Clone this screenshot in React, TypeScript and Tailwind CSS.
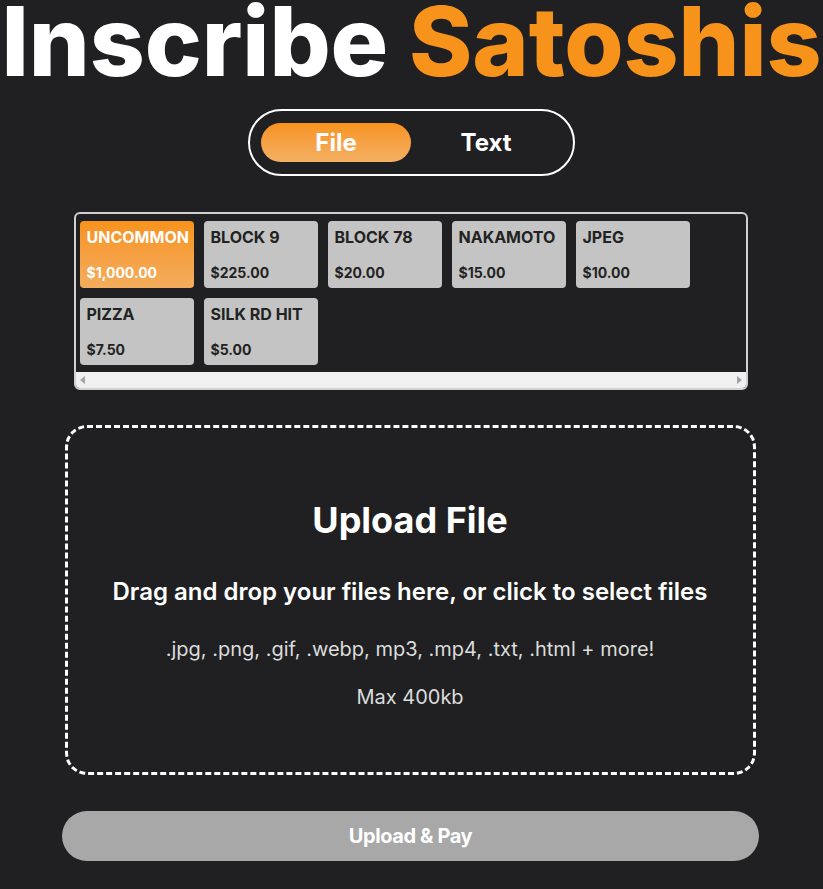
import { useState } from 'react';

type Tier = { name: string; price: string };

const TIERS: Tier[] = [
  { name: 'UNCOMMON', price: '$1,000.00' },
  { name: 'BLOCK 9', price: '$225.00' },
  { name: 'BLOCK 78', price: '$20.00' },
  { name: 'NAKAMOTO', price: '$15.00' },
  { name: 'JPEG', price: '$10.00' },
  { name: 'PIZZA', price: '$7.50' },
  { name: 'SILK RD HIT', price: '$5.00' },
];

const font = { fontFamily: 'Inter, "Noto Sans", sans-serif' };

export default function App() {
  const [mode, setMode] = useState<'file' | 'text'>('file');
  const [tier, setTier] = useState(0);

  return (
    <div className="min-h-screen bg-[#202022] text-white" style={font}>
      <div className="flex flex-col items-center">
        <h1 className="text-[96px] font-extrabold leading-[82px] tracking-[-0.1px] whitespace-nowrap">
          Inscribe <span className="text-[#f7931a]">Satoshis</span>
        </h1>

        {/* file / text switch */}
        <div className="mt-[27px] flex h-[67px] w-[327px] items-center rounded-full border-2 border-white px-[11px]">
          <button
            onClick={() => setMode('file')}
            className={`h-[39px] w-[150px] rounded-full text-[24px] font-bold ${mode === 'file' ? 'bg-gradient-to-b from-[#f7931a] to-[#f4b062]' : ''}`}
          >
            File
          </button>
          <button
            onClick={() => setMode('text')}
            className={`h-[39px] w-[150px] rounded-full text-[24px] font-bold ${mode === 'text' ? 'bg-gradient-to-b from-[#f7931a] to-[#f4b062]' : ''}`}
          >
            Text
          </button>
        </div>

        {/* rarity tiers */}
        <div className="mt-[36px] ml-[-2px] w-[674px] overflow-hidden rounded-[6px] border-2 border-[#d0d0d0]">
          <div className="grid grid-cols-[repeat(5,114px)] gap-[10px] px-[4px] pt-[7px]">
            {TIERS.map((t, i) => (
              <button
                key={t.name}
                onClick={() => setTier(i)}
                className={`flex h-[67px] flex-col justify-between rounded-[4px] px-[7px] pt-[6px] pb-[7px] text-left font-bold ${
                  tier === i
                    ? 'bg-gradient-to-b from-[#f7931a] to-[#f4ad5c] text-white'
                    : 'bg-[#c4c4c4] text-[#222222]'
                }`}
              >
                <span className="text-[16px] leading-[20px]">{t.name}</span>
                <span className="text-[14px] leading-[17px]">{t.price}</span>
              </button>
            ))}
          </div>
          <div className="mt-[7px] flex h-[16px] items-center justify-between bg-[#f0f0f0] px-[4px]">
            <svg width="6" height="8" viewBox="0 0 6 8">
              <path d="M5 0 L0 4 L5 8 Z" fill="#a3a3a3" />
            </svg>
            <svg width="6" height="8" viewBox="0 0 6 8">
              <path d="M1 0 L6 4 L1 8 Z" fill="#a3a3a3" />
            </svg>
          </div>
        </div>

        {/* drop zone */}
        <div className="mt-[35px] ml-[-3px] flex h-[350px] w-[691px] cursor-pointer flex-col items-center rounded-[22px] border-[3px] border-dashed border-white pt-[70px]">
          <h2 className="text-[36px] leading-[44px] font-bold">Upload File</h2>
          <p className="mt-[35px] text-[24px] leading-[30px] font-semibold">
            Drag and drop your files here, or click to select files
          </p>
          <p className="mt-[29px] text-[20px] leading-[26px] text-[#dcdcdc]">
            .jpg, .png, .gif, .webp, mp3, .mp4, .txt, .html + more!
          </p>
          <p className="mt-[22px] text-[20px] leading-[26px] text-[#dcdcdc]">Max 400kb</p>
        </div>

        <button className="mt-[36px] ml-[-2px] h-[50px] w-[697px] rounded-full bg-[#a8a8a8] text-[20px] font-bold tracking-[-0.4px] text-white">
          Upload &amp; Pay
        </button>
      </div>
    </div>
  );
}
